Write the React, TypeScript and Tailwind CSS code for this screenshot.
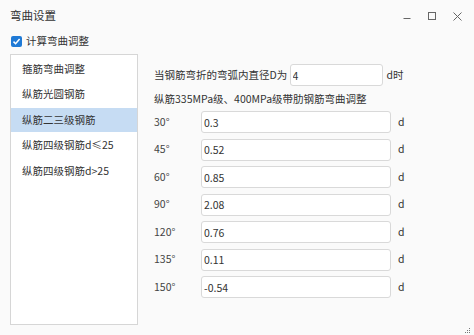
import React from 'react';

const items = ['箍筋弯曲调整', '纵筋光圆钢筋', '纵筋二三级钢筋', '纵筋四级钢筋d≤25', '纵筋四级钢筋d>25'];

const rows = [
  { angle: '30°', value: '0.3' },
  { angle: '45°', value: '0.52' },
  { angle: '60°', value: '0.85' },
  { angle: '90°', value: '2.08' },
  { angle: '120°', value: '0.76' },
  { angle: '135°', value: '0.11' },
  { angle: '150°', value: '-0.54' },
];

function App() {
  const selected = 2;

  return (
    <div className="relative w-[474px] h-[335px] overflow-hidden bg-[#fafafa] text-[#333] text-[10.5px] leading-none font-['Noto_Sans_CJK_SC','Noto_Sans',sans-serif]">
      {/* Title bar */}
      <div className="flex h-[32px] items-center justify-between pl-[10px] pr-[12px]">
        <span className="text-[11.5px] text-[#333]">弯曲设置</span>
        <div className="flex items-center gap-[17px] text-[#666]">
          <svg width="8" height="9" viewBox="0 0 8 9">
            <line x1="0.5" y1="6.5" x2="7.5" y2="6.5" stroke="currentColor" strokeWidth="1" />
          </svg>
          <svg width="8" height="9" viewBox="0 0 8 9">
            <rect x="0.5" y="0.5" width="7" height="7" fill="none" stroke="currentColor" strokeWidth="1" />
          </svg>
          <svg width="9" height="9" viewBox="0 0 9 9">
            <path d="M0.5 0.5 L8.5 8.5 M8.5 0.5 L0.5 8.5" stroke="currentColor" strokeWidth="1" />
          </svg>
        </div>
      </div>

      {/* Checkbox */}
      <div className="flex h-[18px] items-center gap-[4px] pl-[11px]">
        <span className="flex h-[11px] w-[11px] items-center justify-center rounded-[2px] bg-[#1f7ad6]">
          <svg width="9" height="9" viewBox="0 0 9 9">
            <path d="M1.5 4.6 L3.6 6.7 L7.6 2" fill="none" stroke="white" strokeWidth="1.5" />
          </svg>
        </span>
        <span>计算弯曲调整</span>
      </div>

      {/* Body */}
      <div className="mt-[4px] flex pl-[10px]">
        <div className="flex h-[271px] w-[128px] flex-col gap-[1.5px] border border-[#d6d6d6] bg-white pt-[2px]">
          {items.map((item, i) => (
            <div
              key={item}
              className={`flex h-[24px] items-center pl-[11px] ${i === selected ? 'bg-[#c6dcf3]' : ''}`}
            >
              {item}
            </div>
          ))}
        </div>

        <div className="ml-[16px] flex flex-col pt-[10px]">
          <div className="flex h-[22px] items-center">
            <span className="w-[135.5px]">当钢筋弯折的弯弧内直径D为</span>
            <input
              readOnly
              defaultValue="4"
              className="h-[22px] w-[93px] rounded-[3px] border border-[#d9d9d9] bg-white px-[2px] text-[10.5px] text-[#333] outline-none"
            />
            <span className="ml-[4px]">d时</span>
          </div>

          <div className="mt-[5px] flex h-[16px] items-center">纵筋335MPa级、400MPa级带肋钢筋弯曲调整</div>

          <div className="mt-[4px] flex flex-col gap-[5.5px]">
            {rows.map((row) => (
              <div key={row.angle} className="flex h-[22px] items-center">
                <span className="w-[47px] text-[#444]">{row.angle}</span>
                <input
                  readOnly
                  defaultValue={row.value}
                  className="h-[22px] w-[190px] rounded-[3px] border border-[#d9d9d9] bg-white px-[2px] text-[10.5px] text-[#333] outline-none"
                />
                <span className="ml-[7px]">d</span>
              </div>
            ))}
          </div>
        </div>
      </div>

      {/* Resize grip */}
      <svg className="absolute bottom-[1px] right-[3px]" width="6" height="6" viewBox="0 0 6 6">
        <rect x="4" y="0" width="1" height="1" fill="#777" />
        <rect x="2" y="2" width="1" height="1" fill="#777" />
        <rect x="4" y="2" width="1" height="1" fill="#777" />
        <rect x="0" y="4" width="1" height="1" fill="#777" />
        <rect x="2" y="4" width="1" height="1" fill="#777" />
        <rect x="4" y="4" width="1" height="1" fill="#777" />
      </svg>
    </div>
  );
}

export default App;
